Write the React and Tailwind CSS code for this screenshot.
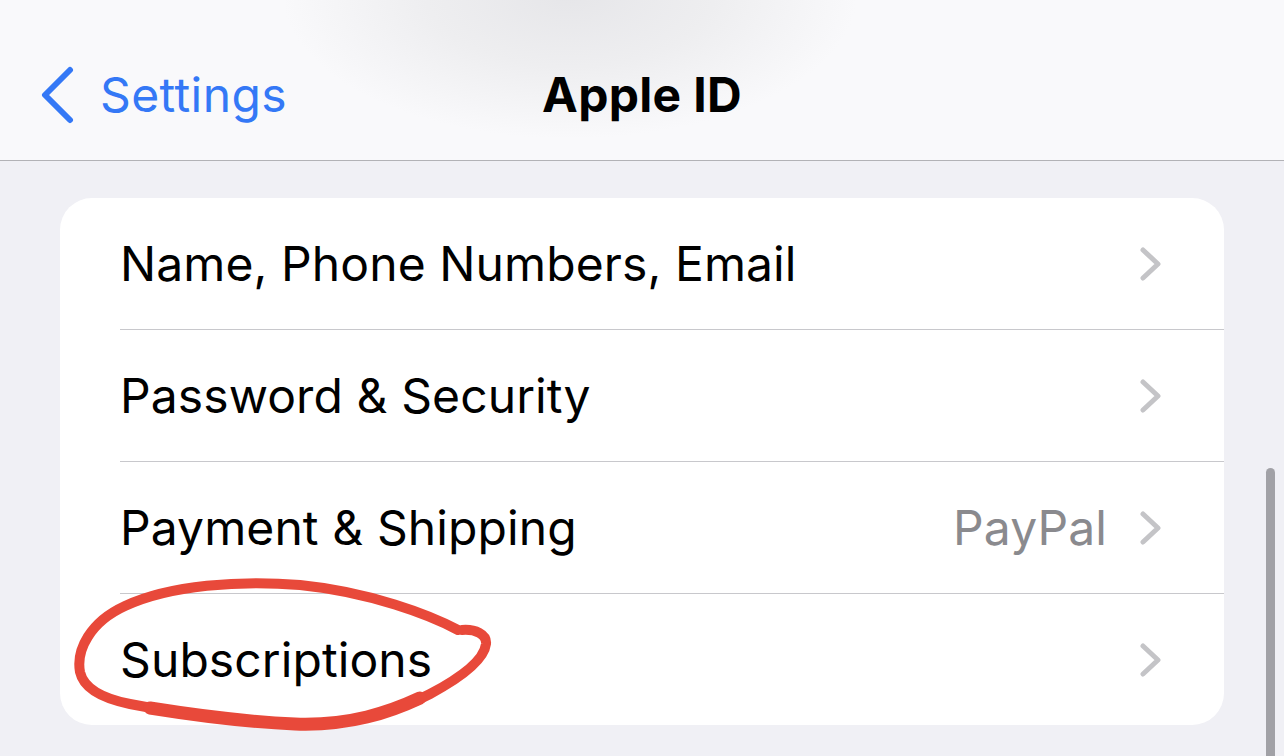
export default function App() {
  const rows = [
    { label: "Name, Phone Numbers, Email" },
    { label: "Password & Security" },
    { label: "Payment & Shipping", detail: "PayPal" },
    { label: "Subscriptions" },
  ];

  return (
    <div
      className="relative w-full h-[756px] overflow-hidden bg-[#f0f0f5]"
      style={{ fontFamily: "Inter, 'Noto Sans', sans-serif" }}
    >
      {/* nav bar */}
      <div className="relative h-[161px] bg-[#f9f9fb] border-b border-[#b2b2b6] overflow-hidden">
        <div className="absolute left-[280px] top-[-150px] w-[580px] h-[290px] rounded-full bg-[radial-gradient(ellipse_at_center,#e6e6e9_0%,#eeeef0_35%,transparent_70%)]" />
        <div className="relative grid grid-cols-[1fr_auto_1fr] items-center h-full pt-[30px]">
          <div className="flex items-center pl-[40px] gap-[26px] text-[#3478f6]">
            <svg width="34" height="58" viewBox="0 0 34 58" fill="none">
              <polyline
                points="30,4 5,29 30,54"
                stroke="#3478f6"
                strokeWidth="6"
                strokeLinecap="round"
                strokeLinejoin="round"
              />
            </svg>
            <span className="text-[48px] leading-none tracking-[0.4px]">Settings</span>
          </div>
          <div className="text-[48px] font-bold leading-none text-black tracking-[0.3px]">
            Apple ID
          </div>
          <div />
        </div>
      </div>

      {/* list */}
      <div className="pt-[37px] pl-[60px] pr-[60px]">
        <div className="bg-white rounded-[32px] overflow-hidden">
          {rows.map((row, i) => (
            <div key={i} className="pl-[60px]">
              <div
                className={`flex items-center pr-[62px] ${
                  i === 0 ? "h-[131px]" : "h-[132px] border-t border-[#c8c8cc]"
                }`}
              >
                <span className="flex-1 text-[48px] leading-none text-black tracking-[0.1px]">
                  {row.label}
                </span>
                {row.detail && (
                  <span className="text-[48px] leading-none text-[#8a8a8e] tracking-[0.1px] mr-[33px]">
                    {row.detail}
                  </span>
                )}
                <svg width="22" height="34" viewBox="0 0 22 34" fill="none">
                  <polyline
                    points="3,3 18,17 3,31"
                    stroke="#c4c4c7"
                    strokeWidth="5"
                    strokeLinecap="round"
                    strokeLinejoin="round"
                  />
                </svg>
              </div>
            </div>
          ))}
        </div>
      </div>

      {/* scroll indicator */}
      <div className="absolute left-[1266px] top-[468px] w-[9px] h-[300px] rounded-full bg-[#a1a1a6]" />

      {/* red hand-drawn circle */}
      <svg
        className="absolute inset-0 pointer-events-none"
        width="1284"
        height="756"
        viewBox="0 0 1284 756"
        fill="none"
      >
        <path
          d="M458 630 C430 615 370 592 300 585 C240 580 170 585 125 606 C90 622 76 650 80 672 C84 690 105 699 130 704 C180 714 240 722 295 724 C350 726 400 710 430 694 C460 678 484 660 486 644 C487 634 475 629 462 630"
          stroke="#e8493a"
          strokeWidth="10"
          strokeLinecap="round"
          strokeLinejoin="round"
        />
        <path
          d="M150 708 C200 716 250 722 295 724 C350 726 390 712 420 698"
          stroke="#e8493a"
          strokeWidth="13"
          strokeLinecap="round"
        />
      </svg>
    </div>
  );
}
